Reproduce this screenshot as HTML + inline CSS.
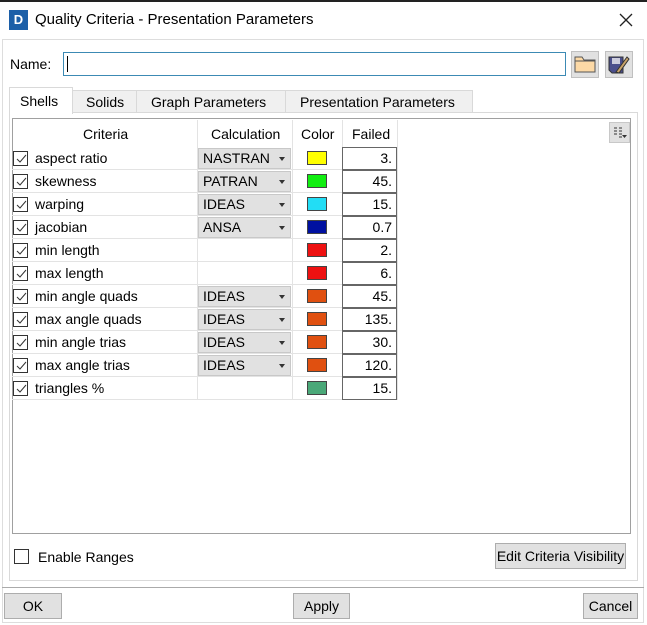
<!DOCTYPE html>
<html><head><style>
*{box-sizing:border-box;margin:0;padding:0}
body{width:647px;height:625px;background:#fff;font-family:"Liberation Sans",sans-serif;font-size:14px;color:#000;position:relative;overflow:hidden}
.a{position:absolute}
.btn{position:absolute;background:#e1e1e1;border:1px solid #adadad;text-align:center;font-size:14px}
.row{position:absolute;left:12px;width:386px;height:23px;border-bottom:1px solid #e3e3e3}
.cb{position:absolute;left:1px;top:4px;width:15px;height:15px;border:1px solid #333;background:#fff}
.cb svg{position:absolute;left:1px;top:1px}
.lbl{position:absolute;left:23px;top:3px}
.combo{position:absolute;left:186px;top:1px;width:93px;height:21px;background:#e1e1e1;border:1px solid #c8c8c8;padding-left:4px;line-height:19px}
.combo:after{content:"";position:absolute;right:5px;top:8px;border-left:3.5px solid transparent;border-right:3.5px solid transparent;border-top:4px solid #333}
.sw{position:absolute;left:295px;top:4px;width:20px;height:14px;border:1px solid #444}
.fv{position:absolute;left:330px;top:0px;width:55px;height:23px;border:1px solid #666;background:#fff;text-align:right;padding-right:4px;line-height:21px}
.vl{position:absolute;top:120px;height:280px;width:1px;background:#e3e3e3}
</style></head><body>
<div class="a" style="left:0;top:0;width:647px;height:2px;background:#222"></div>
<div class="a" style="left:9px;top:10px;width:19px;height:20px;background:#1c5fa8;color:#fff;font-size:13px;font-weight:bold;text-align:center;line-height:20px">D</div>
<div class="a" style="left:35px;top:11px;font-size:15px">Quality Criteria - Presentation Parameters</div>
<svg class="a" style="left:618px;top:12px" width="16" height="16"><path d="M2 2L14 14M14 2L2 14" stroke="#222" stroke-width="1.3"/></svg>
<div class="a" style="left:2px;top:39px;width:642px;height:584px;border:1px solid #ddd"></div>
<div class="a" style="left:10px;top:56px;font-size:14px">Name:</div>
<div class="a" style="left:63px;top:52px;width:503px;height:24px;border:1px solid #3c8ab4;background:#fff"></div>
<div class="a" style="left:67px;top:56px;width:1px;height:16px;background:#000"></div>
<div class="a" style="left:571px;top:51px;width:28px;height:27px;background:#e1e1e1;border:1px solid #c0c0c0"></div>
<svg class="a" style="left:574px;top:55px" width="22" height="19"><path d="M1 2h7l2 3h11v12H1z" fill="#fcd9a6" stroke="#555"/><path d="M1 6h20" stroke="#555"/></svg>
<div class="a" style="left:605px;top:51px;width:28px;height:27px;background:#e1e1e1;border:1px solid #c0c0c0"></div>
<svg class="a" style="left:608px;top:54px" width="22" height="21"><path d="M1 3h14v16H4l-3-3z" fill="#4a4e8c" stroke="#333"/><rect x="4" y="4" width="8" height="6" fill="#ccd"/><path d="M8 18L19 3l2 2L11 19z" fill="#c9a36a" stroke="#333"/></svg>
<!-- tabs -->
<div class="a" style="left:9px;top:112px;width:629px;height:469px;border:1px solid #d9d9d9"></div>
<div class="a" style="left:72px;top:90px;width:401px;height:23px;background:#f0f0f0;border:1px solid #d9d9d9"></div>
<div class="a" style="left:136px;top:90px;width:1px;height:23px;background:#d9d9d9"></div>
<div class="a" style="left:285px;top:90px;width:1px;height:23px;background:#d9d9d9"></div>
<div class="a" style="left:9px;top:87px;width:64px;height:27px;background:#fff;border:1px solid #d9d9d9;border-bottom:none"></div>
<div class="a" style="left:20px;top:93px">Shells</div>
<div class="a" style="left:86px;top:94px">Solids</div>
<div class="a" style="left:151px;top:94px">Graph Parameters</div>
<div class="a" style="left:300px;top:94px">Presentation Parameters</div>
<!-- table box -->
<div class="a" style="left:12px;top:118px;width:619px;height:416px;border:1px solid #a0a0a0"></div>
<div class="vl" style="left:197px"></div><div class="vl" style="left:292px"></div><div class="vl" style="left:342px"></div><div class="vl" style="left:397px"></div>
<div class="a" style="left:83px;top:126px">Criteria</div>
<div class="a" style="left:211px;top:126px">Calculation</div>
<div class="a" style="left:301px;top:126px">Color</div>
<div class="a" style="left:352px;top:126px">Failed</div>
<div class="a" style="left:609px;top:122px;width:21px;height:21px;background:#e1e1e1;border:1px solid #c8c8c8"></div>
<svg class="a" style="left:613px;top:126px" width="14" height="14"><path d="M1 2h3M1 5h3M1 8h3M6 2h3M6 5h3M6 8h3M6 11h3" stroke="#333"/><path d="M9 9l2.5 3 2.5-3z" fill="#333"/></svg>

<div class="row" style="top:147px"><div class="cb"><svg width="12" height="12"><path d="M2 6l3 3 6-7" stroke="#333" fill="none"/></svg></div><div class="lbl">aspect ratio</div><div class="combo">NASTRAN</div><div class="sw" style="background:#ffff00"></div><div class="fv">3.</div></div>
<div class="row" style="top:170px"><div class="cb"><svg width="12" height="12"><path d="M2 6l3 3 6-7" stroke="#333" fill="none"/></svg></div><div class="lbl">skewness</div><div class="combo">PATRAN</div><div class="sw" style="background:#11ee11"></div><div class="fv">45.</div></div>
<div class="row" style="top:193px"><div class="cb"><svg width="12" height="12"><path d="M2 6l3 3 6-7" stroke="#333" fill="none"/></svg></div><div class="lbl">warping</div><div class="combo">IDEAS</div><div class="sw" style="background:#22ddf5"></div><div class="fv">15.</div></div>
<div class="row" style="top:216px"><div class="cb"><svg width="12" height="12"><path d="M2 6l3 3 6-7" stroke="#333" fill="none"/></svg></div><div class="lbl">jacobian</div><div class="combo">ANSA</div><div class="sw" style="background:#0010a0"></div><div class="fv">0.7</div></div>
<div class="row" style="top:239px"><div class="cb"><svg width="12" height="12"><path d="M2 6l3 3 6-7" stroke="#333" fill="none"/></svg></div><div class="lbl">min length</div><div class="sw" style="background:#ee1111"></div><div class="fv">2.</div></div>
<div class="row" style="top:262px"><div class="cb"><svg width="12" height="12"><path d="M2 6l3 3 6-7" stroke="#333" fill="none"/></svg></div><div class="lbl">max length</div><div class="sw" style="background:#ee1111"></div><div class="fv">6.</div></div>
<div class="row" style="top:285px"><div class="cb"><svg width="12" height="12"><path d="M2 6l3 3 6-7" stroke="#333" fill="none"/></svg></div><div class="lbl">min angle quads</div><div class="combo">IDEAS</div><div class="sw" style="background:#e05010"></div><div class="fv">45.</div></div>
<div class="row" style="top:308px"><div class="cb"><svg width="12" height="12"><path d="M2 6l3 3 6-7" stroke="#333" fill="none"/></svg></div><div class="lbl">max angle quads</div><div class="combo">IDEAS</div><div class="sw" style="background:#e05010"></div><div class="fv">135.</div></div>
<div class="row" style="top:331px"><div class="cb"><svg width="12" height="12"><path d="M2 6l3 3 6-7" stroke="#333" fill="none"/></svg></div><div class="lbl">min angle trias</div><div class="combo">IDEAS</div><div class="sw" style="background:#e05010"></div><div class="fv">30.</div></div>
<div class="row" style="top:354px"><div class="cb"><svg width="12" height="12"><path d="M2 6l3 3 6-7" stroke="#333" fill="none"/></svg></div><div class="lbl">max angle trias</div><div class="combo">IDEAS</div><div class="sw" style="background:#e05010"></div><div class="fv">120.</div></div>
<div class="row" style="top:377px"><div class="cb"><svg width="12" height="12"><path d="M2 6l3 3 6-7" stroke="#333" fill="none"/></svg></div><div class="lbl">triangles %</div><div class="sw" style="background:#4aa878"></div><div class="fv">15.</div></div>

<div class="a" style="left:14px;top:549px;width:15px;height:15px;border:1px solid #333"></div>
<div class="a" style="left:38px;top:549px">Enable Ranges</div>
<div class="btn" style="left:495px;top:543px;width:131px;height:26px;line-height:24px">Edit Criteria Visibility</div>
<div class="a" style="left:2px;top:587px;width:642px;height:1px;background:#aaa"></div>
<div class="btn" style="left:4px;top:593px;width:58px;height:26px;line-height:24px">OK</div>
<div class="btn" style="left:293px;top:593px;width:57px;height:26px;line-height:24px">Apply</div>
<div class="btn" style="left:583px;top:593px;width:55px;height:26px;line-height:24px">Cancel</div>
</body></html>
